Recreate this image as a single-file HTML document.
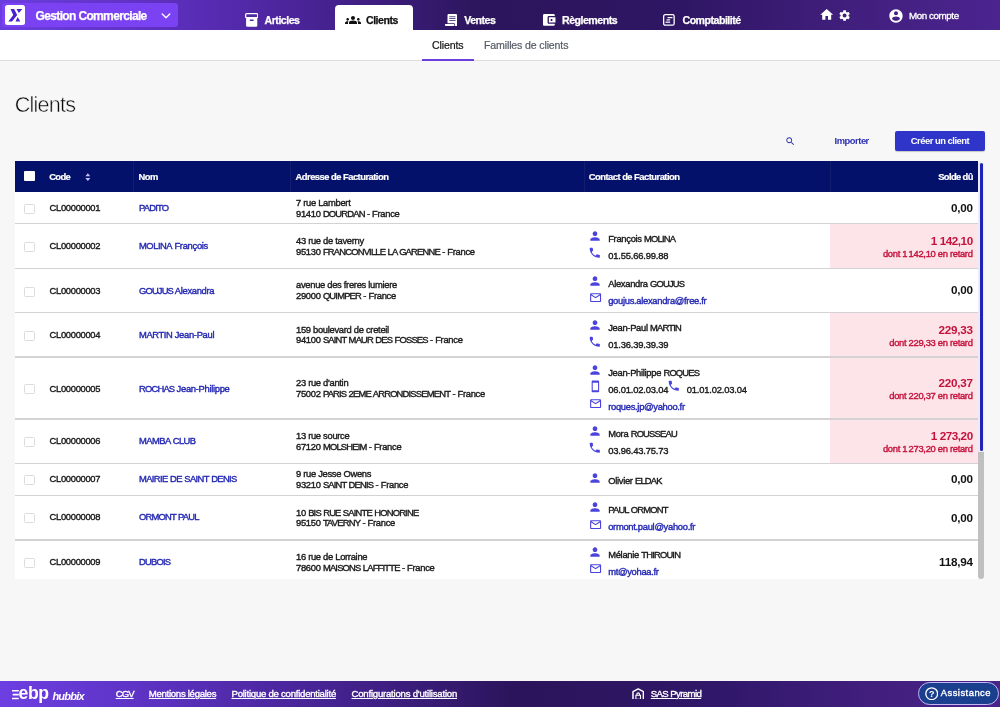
<!DOCTYPE html>
<html lang="fr">
<head>
<meta charset="utf-8">
<title>Clients</title>
<style>
*{box-sizing:border-box;margin:0;padding:0}
html,body{width:1000px;height:707px;overflow:hidden}
body{position:relative;background:#f7f7f8;font-family:"Liberation Sans",Arial,sans-serif;font-size:9.4px;color:#1a1a1a;letter-spacing:-0.3px}
#pg{position:absolute;left:0;top:0;width:1000px;height:707px;will-change:transform}
.abs{position:absolute}
svg{display:block}
a{text-decoration:none;color:inherit}
/* top bar */
#top{position:absolute;left:0;top:0;width:1000px;height:30px;background:linear-gradient(90deg,#6b3ddf 0px,#5f31c2 150px,#4a2498 300px,#2c155c 480px,#2f1664 680px,#411f7d 850px,#4b248f 1000px)}
#logo{position:absolute;left:4.800px;top:4.650px;width:20.600px;height:20.700px;background:#fff;border-radius:2.500px;overflow:hidden}
#app{position:absolute;left:2px;top:2.500px;width:175.500px;height:24.500px;background:#7b42f3;border-radius:3px}
#app span{position:absolute;left:33.600px;top:6.200px;font-size:12px;line-height:15px;font-weight:bold;color:#fff;letter-spacing:-0.650px;white-space:nowrap;-webkit-text-stroke:0.25px}
.tab{position:absolute;top:13.600px;line-height:13px;color:#fff;font-weight:bold;font-size:10.600px;letter-spacing:-0.500px;white-space:nowrap;-webkit-text-stroke:0.25px}
#tabc{position:absolute;left:335px;top:5px;width:78px;height:26px;background:#fff;border-radius:4px 4px 0 0}
/* subnav */
#sub{position:absolute;left:0;top:30px;width:1000px;height:31px;background:#fff;border-bottom:1.5px solid #dcdcde}
#sub span{position:absolute;top:9px;font-size:10.6px;line-height:13px;white-space:nowrap;letter-spacing:-0.15px;-webkit-text-stroke:0.2px}
#ul{position:absolute;left:422px;top:59px;width:52px;height:2px;background:#6a3fdb}
h1{position:absolute;left:14.800px;top:91.300px;font-size:21.600px;font-weight:normal;line-height:28px;color:#0c0c0c;letter-spacing:-0.800px;-webkit-text-stroke:0.480px #f7f7f8}
/* toolbar */
#imp{position:absolute;left:834.600px;top:135px;font-weight:bold;color:#2b30b0;font-size:9.4px;line-height:12px;letter-spacing:-0.480px}
#btn{position:absolute;left:895px;top:131px;width:90px;height:20px;background:#2e35c8;border-radius:2px;color:#fff;font-weight:bold;text-align:center;line-height:20px;font-size:9.4px;letter-spacing:-0.490px;box-shadow:0 1px 1px rgba(0,0,0,.2)}
/* table */
#th{position:absolute;left:15px;top:161.300px;width:962.800px;height:30.700px;background:#04116b}
#th span{position:absolute;top:9.700px;color:#fff;font-weight:bold;line-height:12px;white-space:nowrap;font-size:9.4px;letter-spacing:-0.520px;-webkit-text-stroke:0.2px}
#th i{position:absolute;top:0;width:1px;height:31px;background:#131d70}
.rw{position:absolute;left:15px;width:962.800px;background:#fff}
.rw .pk{position:absolute;left:814.800px;top:0;width:148px;height:100%;background:#fde4e9}
.sp{position:absolute;left:15px;width:962.800px;height:1.250px;background:#d3d3d5}
.cb{position:absolute;left:24.300px;margin-top:0.600px;width:10.700px;height:10.100px;border:1px solid #dcdcdc;border-radius:1.5px;background:#fff}
.tx{position:absolute;line-height:11px;white-space:nowrap;-webkit-text-stroke:0.38px}
u{text-decoration:none;letter-spacing:-0.8px;word-spacing:0.5px}
.c{left:49.5px}
.n{left:139px;color:#2428b2}
.a{left:296px;line-height:10.7px;margin-top:0.9px}
.k{left:608.2px}
.k.l{color:#2428b2}
.s{right:27.300px;font-size:11.700px;font-weight:bold;line-height:14px;letter-spacing:-0.250px;color:#111;-webkit-text-stroke:0}
.s.r{color:#c4123c}
.d{right:27.400px;margin-top:-1px;color:#c4123c}
.ic{position:absolute;fill:#4a43dd}
.ts{font-style:normal;font-size:5px;letter-spacing:0}
.s .ts{font-size:10px}
/* scrollbar */
#sbt{position:absolute;left:978.400px;top:449px;width:6px;height:129.500px;background:#c0c0c1;border-radius:0 0 3px 3px}
#sbl{position:absolute;left:978.400px;top:162px;width:6px;height:290px;background:#ecebfb;border-radius:3px 3px 0 0}
#sbh{position:absolute;left:979.600px;top:162.500px;width:3.600px;height:288.500px;background:#2224b8;border-radius:1.800px}
/* footer */
#ft{position:absolute;left:0;top:681.400px;width:1000px;height:25.600px;background:linear-gradient(90deg,#6d3fe2 0px,#5c32c2 150px,#43218c 350px,#2b145a 520px,#30176a 720px,#421f7e 880px,#4a238b 1000px);color:#fff}
#ft a{position:absolute;top:6.400px;text-decoration:underline;text-underline-offset:1px;line-height:12px;white-space:nowrap;font-size:9.600px;-webkit-text-stroke:0.350px}
#as{position:absolute;left:917.500px;top:681.600px;width:81px;height:23.200px;border:1.200px solid #c3b4f2;border-radius:11.600px;background:#1b3f8f}
#as span{position:absolute;left:22.200px;top:4.500px;color:#fff;font-size:9.400px;line-height:12px;letter-spacing:.5px;-webkit-text-stroke:0.350px}
</style>
</head>
<body>
<div id="pg">
<svg width="0" height="0" style="position:absolute"><defs>
<path id="i-person" d="M12 12c2.210 0 4-1.790 4-4s-1.790-4-4-4-4 1.790-4 4 1.790 4 4 4zm0 2c-2.670 0-8 1.340-8 4v2h16v-2c0-2.660-5.330-4-8-4z"/>
<path id="i-phone" d="M6.620 10.790c1.440 2.830 3.760 5.140 6.590 6.590l2.200-2.200c.27-.27.67-.36 1.020-.24 1.120.37 2.330.57 3.570.57.550 0 1 .45 1 1V20c0 .550-.45 1-1 1-9.390 0-17-7.610-17-17 0-.550.45-1 1-1h3.500c.550 0 1 .45 1 1 0 1.250.2 2.450.57 3.570.11.35.03.74-.25 1.020l-2.200 2.200z"/>
<path id="i-mail" d="M20 4H4c-1.100 0-1.990.9-1.990 2L2 18c0 1.100.9 2 2 2h16c1.100 0 2-.9 2-2V6c0-1.100-.9-2-2-2zm0 14H4V8l8 5 8-5v10zm-8-7L4 6h16l-8 5z"/>
<path id="i-mobile" d="M17 1.010L7 1c-1.100 0-1.990.9-1.990 2v18c0 1.100.89 2 1.990 2h10c1.100 0 2-.9 2-2V3c0-1.100-.9-1.990-2-1.990zM17 19H7V5h10v14z"/>
</defs></svg>
<div id="top">
  <div id="app"><span>Gestion Commerciale</span>
    <svg class="abs" style="left:158.600px;top:10px" width="10" height="6" viewBox="0 0 10 6"><path d="M1.200 1.100 L5 4.700 L8.800 1.100" fill="none" stroke="#fff" stroke-width="1.400" stroke-linecap="round" stroke-linejoin="round"/></svg>
  </div>
  <div id="logo"><svg width="20.600" height="20.700" viewBox="4.800 4.650 20.600 20.700"><g fill="#4a20cf"><polygon points="10.300,8.600 13.900,8.600 17,14.700 11.800,21.100 8.100,21.100 13.100,14.700"/><polygon points="16.300,8.600 22.100,8.600 18.700,12.600"/><polygon points="17.450,16.600 20.100,21.100 15.300,21.100"/></g></svg></div>
  <div id="tabc"></div>
  <!-- Articles -->
  <svg class="abs" style="left:245px;top:13.200px" width="13.400" height="13.700" viewBox="0 0 13.400 13.700"><rect x="0.650" y="0.650" width="12.100" height="4" rx="1" fill="none" stroke="#fff" stroke-width="1.300"/><path d="M1.100 4.300h11.200v8.200a1.200 1.200 0 0 1-1.200 1.200H2.300a1.200 1.200 0 0 1-1.200-1.200z" fill="#fff"/><rect x="4.700" y="6.600" width="4" height="1.300" rx=".4" fill="#4b269e"/></svg>
  <div class="tab" style="left:264.600px">Articles</div>
  <!-- Clients -->
  <svg class="abs" style="left:345px;top:11.800px" width="16" height="16" viewBox="0 0 24 24" fill="#111"><path d="M12 12.750c1.630 0 3.070.39 4.240.9 1.080.48 1.760 1.560 1.760 2.730V18H6v-1.610c0-1.180.68-2.260 1.760-2.730 1.170-.52 2.610-.91 4.240-.91zM4 13c1.100 0 2-.9 2-2s-.9-2-2-2-2 .9-2 2 .9 2 2 2zm1.130 1.100c-.37-.06-.74-.1-1.130-.1-.99 0-1.930.21-2.780.58C.48 14.900 0 15.620 0 16.430V18h4.500v-1.610c0-.83.23-1.610.63-2.290zM20 13c1.100 0 2-.9 2-2s-.9-2-2-2-2 .9-2 2 .9 2 2 2zm4 3.430c0-.81-.48-1.530-1.220-1.850-.85-.37-1.790-.58-2.780-.58-.39 0-.76.040-1.130.1.400.68.630 1.460.630 2.290V18H24v-1.570zM12 6c1.660 0 3 1.340 3 3s-1.340 3-3 3-3-1.340-3-3 1.340-3 3-3z"/></svg>
  <div class="tab" style="left:366px;color:#111">Clients</div>
  <!-- Ventes -->
  <svg class="abs" style="left:445px;top:13.500px" width="12.200" height="12.300" viewBox="0 0 12.200 12.300"><path d="M2.500 1.200a1.200 1.200 0 0 1 1.200-1.200h7.300a1.200 1.200 0 0 1 1.200 1.200v9.800a1.300 1.300 0 0 1-1.300 1.300H9.700V9.300H2.500z" fill="#fff"/><path d="M0 9.900h9v1.300a1.100 1.100 0 0 0 1.100 1.100H1.600A1.600 1.600 0 0 1 0 10.700z" fill="#fff"/><g fill="#2f1668"><rect x="4.300" y="2.400" width="6.200" height=".75"/><rect x="4.300" y="4.200" width="6.200" height=".75"/><rect x="4.300" y="6" width="6.200" height=".75"/></g></svg>
  <div class="tab" style="left:464.200px">Ventes</div>
  <!-- Reglements -->
  <svg class="abs" style="left:540.900px;top:12.200px" width="15.800" height="15.800" viewBox="0 0 24 24" fill="#fff"><path d="M21 18v1c0 1.100-.9 2-2 2H5c-1.110 0-2-.9-2-2V5c0-1.100.89-2 2-2h14c1.100 0 2 .9 2 2v1h-9c-1.110 0-2 .9-2 2v8c0 1.100.89 2 2 2h9zm-9-2h10V8H12v8zm4-2.500c-.83 0-1.500-.67-1.500-1.500s.67-1.500 1.500-1.500 1.500.67 1.500 1.500-.67 1.500-1.500 1.500z"/></svg>
  <div class="tab" style="left:562px">Règlements</div>
  <!-- Comptabilite -->
  <svg class="abs" style="left:663.400px;top:13.900px" width="11.800" height="11.800" viewBox="0 0 11.800 11.800"><rect x=".65" y=".65" width="10.500" height="10.500" rx="1.500" fill="none" stroke="#fff" stroke-width="1.300"/><g fill="#fff"><rect x="4.500" y="3" width="5" height="1.200"/><rect x="3.500" y="5.300" width="3.600" height="1.200"/><rect x="2.500" y="7.600" width="4.600" height="1.200"/></g></svg>
  <div class="tab" style="left:682.500px">Comptabilité</div>
  <!-- home / settings / account -->
  <svg class="abs" style="left:819.100px;top:6.900px" width="15.400" height="15.400" viewBox="0 0 24 24" fill="#fff"><path d="M10 20v-6h4v6h5v-8h3L12 3 2 12h3v8z"/></svg>
  <svg class="abs" style="left:838.300px;top:8.700px" width="13.200" height="13.200" viewBox="0 0 24 24" fill="#fff"><path d="M19.140 12.940c.04-.3.060-.61.060-.94 0-.32-.02-.64-.07-.94l2.030-1.580c.18-.14.230-.41.120-.61l-1.920-3.320c-.12-.22-.37-.29-.59-.22l-2.390.96c-.5-.38-1.030-.7-1.620-.94l-.36-2.540c-.04-.24-.24-.41-.48-.41h-3.840c-.24 0-.43.170-.47.410l-.36 2.540c-.59.240-1.130.57-1.620.94l-2.390-.96c-.22-.08-.47 0-.59.220L2.740 8.870c-.12.210-.08.470.12.610l2.030 1.580c-.05.300-.09.630-.09.940s.02.640.07.940l-2.030 1.580c-.18.140-.23.410-.12.610l1.920 3.320c.12.220.37.290.59.220l2.390-.96c.5.380 1.030.7 1.620.94l.36 2.540c.05.240.24.410.48.410h3.840c.24 0 .44-.17.470-.41l.36-2.540c.59-.24 1.130-.56 1.620-.94l2.390.96c.22.080.47 0 .59-.22l1.920-3.320c.12-.22.070-.47-.12-.61l-2.010-1.580zM12 15.600c-1.980 0-3.600-1.620-3.600-3.600s1.620-3.600 3.600-3.600 3.600 1.620 3.600 3.600-1.620 3.600-3.600 3.600z"/></svg>
  <svg class="abs" style="left:887.900px;top:8.300px" width="16" height="16" viewBox="0 0 24 24" fill="#fff"><path d="M12 2C6.480 2 2 6.480 2 12s4.480 10 10 10 10-4.480 10-10S17.520 2 12 2zm0 3c1.660 0 3 1.340 3 3s-1.340 3-3 3-3-1.340-3-3 1.340-3 3-3zm0 14.200c-2.500 0-4.710-1.280-6-3.220.03-1.990 4-3.080 6-3.080 1.990 0 5.970 1.090 6 3.080-1.290 1.940-3.500 3.220-6 3.220z"/></svg>
  <div class="abs" style="left:908.900px;top:9.700px;color:#fff;font-size:9.800px;line-height:12px;white-space:nowrap;letter-spacing:-0.410px;-webkit-text-stroke:0.300px">Mon compte</div>
</div>
<div id="sub">
  <span style="left:432px;color:#111">Clients</span>
  <span style="left:484px;color:#555b66">Familles de clients</span>
</div>
<div id="ul"></div>
<h1>Clients</h1>
<svg class="abs" style="left:785.300px;top:135.700px" width="10.700" height="10.700" viewBox="0 0 24 24" fill="#2b2fa8"><path d="M15.500 14h-.79l-.28-.27C15.410 12.590 16 11.110 16 9.500 16 5.910 13.090 3 9.500 3S3 5.910 3 9.500 5.910 16 9.500 16c1.610 0 3.090-.59 4.230-1.570l.27.280v.79l5 4.990L20.490 19l-4.990-5zm-6 0C7.010 14 5 11.990 5 9.500S7.010 5 9.500 5 14 7.010 14 9.500 11.990 14 9.500 14z"/></svg>
<div id="imp">Importer</div>
<div id="btn">Créer un client</div>

<div id="th">
  <div class="abs" style="left:9.300px;top:9.700px;width:10.700px;height:10.500px;background:#fff;border-radius:1px"></div>
  <svg class="abs" style="left:70px;top:11.500px" width="6" height="8.200" viewBox="0 0 6 8.200" fill="#c5c3ff"><polygon points="0.400,3.300 5.300,3.300 2.850,0.200"/><polygon points="0.400,5 5.300,5 2.850,7.900"/></svg>
  <span style="left:34.300px;letter-spacing:-0.700px">Code</span>
  <span style="left:123.500px">Nom</span>
  <span style="left:280.600px">Adresse de Facturation</span>
  <span style="left:573.800px">Contact de Facturation</span>
  <span style="right:5px;letter-spacing:-0.620px">Solde dû</span>
  <i style="left:118.200px"></i><i style="left:275.300px"></i><i style="left:569.200px"></i><i style="left:814.600px"></i>
</div>

<div id="rows">
<div class="rw" style="top:192px;height:31.7px">
</div>
<div class="cb" style="top:203.45px"></div>
<div class="tx c" style="top:202.35px">CL00000001</div>
<div class="tx n" style="top:202.35px"><u>PADITO</u></div>
<div class="tx a" style="top:196.95px">7 rue Lambert<br>91410 <u>DOURDAN</u> - France</div>
<div class="tx s" style="top:200.85px">0,00</div>
<div class="rw" style="top:223.7px;height:44.5px">
<div class="pk"></div>
</div>
<div class="cb" style="top:241.55px"></div>
<div class="tx c" style="top:240.45px">CL00000002</div>
<div class="tx n" style="top:240.45px"><u style="letter-spacing:-0.47px">MOLINA</u> François</div>
<div class="tx a" style="top:235.05px">43 rue de taverny<br>95130 <u>FRANCONVILLE LA GARENNE</u> - France</div>
<svg class="ic" style="left:588.20px;top:229.10px" width="14" height="14" viewBox="0 0 24 24"><use href="#i-person"/></svg>
<div class="tx k" style="top:233.10px">François <u>MOLINA</u></div>
<svg class="ic" style="left:588.45px;top:246.05px" width="13.5" height="13.5" viewBox="0 0 24 24"><use href="#i-phone"/></svg>
<div class="tx k" style="letter-spacing:-0.18px;top:249.80px">01.55.66.99.88</div>
<div class="tx s r" style="letter-spacing:-0.45px;top:233.75px">1<i class="ts"> </i>142,10</div>
<div class="tx d" style="top:248.95px">dont 1<i class="ts"> </i>142,10 en retard</div>
<div class="rw" style="top:268.2px;height:44.4px">
</div>
<div class="cb" style="top:286px"></div>
<div class="tx c" style="top:284.9px">CL00000003</div>
<div class="tx n" style="top:284.9px"><u style="letter-spacing:-0.85px">GOUJUS</u> Alexandra</div>
<div class="tx a" style="top:279.5px">avenue des freres lumiere<br>29000 <u>QUIMPER</u> - France</div>
<svg class="ic" style="left:588.20px;top:273.50px" width="14" height="14" viewBox="0 0 24 24"><use href="#i-person"/></svg>
<div class="tx k" style="top:277.50px">Alexandra <u>GOUJUS</u></div>
<svg class="ic" style="left:588.60px;top:291.15px" width="13.2" height="13.2" viewBox="0 0 24 24"><use href="#i-mail"/></svg>
<div class="tx k l" style="top:294.50px">goujus.alexandra@free.fr</div>
<div class="tx s" style="top:283.4px">0,00</div>
<div class="rw" style="top:312.6px;height:44.4px">
<div class="pk"></div>
</div>
<div class="cb" style="top:330.4px"></div>
<div class="tx c" style="top:329.3px">CL00000004</div>
<div class="tx n" style="top:329.3px"><u style="letter-spacing:-0.4px">MARTIN</u> Jean-Paul</div>
<div class="tx a" style="top:323.9px">159 boulevard de creteil<br>94100 <u>SAINT MAUR DES FOSSES</u> - France</div>
<svg class="ic" style="left:588.20px;top:317.90px" width="14" height="14" viewBox="0 0 24 24"><use href="#i-person"/></svg>
<div class="tx k" style="top:321.90px">Jean-Paul <u>MARTIN</u></div>
<svg class="ic" style="left:588.45px;top:334.65px" width="13.5" height="13.5" viewBox="0 0 24 24"><use href="#i-phone"/></svg>
<div class="tx k" style="letter-spacing:-0.18px;top:338.90px">01.36.39.39.39</div>
<div class="tx s r" style="top:322.6px">229,33</div>
<div class="tx d" style="top:337.8px">dont 229,33 en retard</div>
<div class="rw" style="top:357px;height:62px">
<div class="pk"></div>
</div>
<div class="cb" style="top:383.6px"></div>
<div class="tx c" style="top:382.5px">CL00000005</div>
<div class="tx n" style="top:382.5px"><u>ROCHAS</u> Jean-Philippe</div>
<div class="tx a" style="top:377.1px">23 rue d'antin<br>75002 <u>PARIS 2EME ARRONDISSEMENT</u> - France</div>
<svg class="ic" style="left:588.20px;top:362.70px" width="14" height="14" viewBox="0 0 24 24"><use href="#i-person"/></svg>
<div class="tx k" style="top:366.70px">Jean-Philippe <u>ROQUES</u></div>
<svg class="ic" style="left:588.80px;top:380.15px" width="12.8" height="12.8" viewBox="0 0 24 24"><use href="#i-mobile"/></svg>
<div class="tx k" style="letter-spacing:-0.18px;top:383.80px">06.01.02.03.04</div>
<svg class="ic" style="left:667.25px;top:379.45px" width="13.5" height="13.5" viewBox="0 0 24 24"><use href="#i-phone"/></svg>
<div class="tx k" style="letter-spacing:-0.18px;left:686.8px;top:383.80px">01.01.02.03.04</div>
<svg class="ic" style="left:588.60px;top:396.95px" width="13.2" height="13.2" viewBox="0 0 24 24"><use href="#i-mail"/></svg>
<div class="tx k l" style="top:400.80px">roques.jp@yahoo.fr</div>
<div class="tx s r" style="top:375.8px">220,37</div>
<div class="tx d" style="top:391px">dont 220,37 en retard</div>
<div class="rw" style="top:419px;height:44.4px">
<div class="pk"></div>
</div>
<div class="cb" style="top:436.20px"></div>
<div class="tx c" style="top:434.70px">CL00000006</div>
<div class="tx n" style="top:434.70px"><u style="letter-spacing:-0.55px">MAMBA CLUB</u></div>
<div class="tx a" style="top:430.3px">13 rue source<br>67120 <u>MOLSHEIM</u> - France</div>
<svg class="ic" style="left:588.20px;top:423.90px" width="14" height="14" viewBox="0 0 24 24"><use href="#i-person"/></svg>
<div class="tx k" style="top:427.90px">Mora <u>ROUSSEAU</u></div>
<svg class="ic" style="left:588.45px;top:441.15px" width="13.5" height="13.5" viewBox="0 0 24 24"><use href="#i-phone"/></svg>
<div class="tx k" style="letter-spacing:-0.18px;top:444.90px">03.96.43.75.73</div>
<div class="tx s r" style="letter-spacing:-0.45px;top:429px">1<i class="ts"> </i>273,20</div>
<div class="tx d" style="top:444.2px">dont 1<i class="ts"> </i>273,20 en retard</div>
<div class="rw" style="top:463.4px;height:31.9px">
</div>
<div class="cb" style="top:474.35px"></div>
<div class="tx c" style="top:472.85px">CL00000007</div>
<div class="tx n" style="top:472.85px"><u style="letter-spacing:-0.62px">MAIRIE DE SAINT DENIS</u></div>
<div class="tx a" style="top:468.45px">9 rue Jesse Owens<br>93210 <u>SAINT DENIS</u> - France</div>
<svg class="ic" style="left:588.20px;top:470.50px" width="14" height="14" viewBox="0 0 24 24"><use href="#i-person"/></svg>
<div class="tx k" style="top:474.50px">Olivier <u>ELDAK</u></div>
<div class="tx s" style="top:472.35px">0,00</div>
<div class="rw" style="top:495.3px;height:44.7px">
</div>
<div class="cb" style="top:512.65px"></div>
<div class="tx c" style="top:511.15px">CL00000008</div>
<div class="tx n" style="top:511.15px"><u>ORMONT PAUL</u></div>
<div class="tx a" style="top:506.75px">10 <u>BIS RUE SAINTE HONORINE</u><br>95150 <u>TAVERNY</u> - France</div>
<svg class="ic" style="left:588.20px;top:500.20px" width="14" height="14" viewBox="0 0 24 24"><use href="#i-person"/></svg>
<div class="tx k" style="top:504.20px"><u>PAUL ORMONT</u></div>
<svg class="ic" style="left:588.60px;top:517.85px" width="13.2" height="13.2" viewBox="0 0 24 24"><use href="#i-mail"/></svg>
<div class="tx k l" style="top:521.20px">ormont.paul@yahoo.fr</div>
<div class="tx s" style="top:510.65px">0,00</div>
<div class="rw" style="top:540px;height:38.5px">
</div>
<div class="cb" style="top:557.20px"></div>
<div class="tx c" style="top:555.70px">CL00000009</div>
<div class="tx n" style="top:555.70px"><u>DUBOIS</u></div>
<div class="tx a" style="top:551.3px">16 rue de Lorraine<br>78600 <u>MAISONS LAFFITTE</u> - France</div>
<svg class="ic" style="left:588.20px;top:544.60px" width="14" height="14" viewBox="0 0 24 24"><use href="#i-person"/></svg>
<div class="tx k" style="top:548.60px">Mélanie <u>THIROUIN</u></div>
<svg class="ic" style="left:588.60px;top:562.25px" width="13.2" height="13.2" viewBox="0 0 24 24"><use href="#i-mail"/></svg>
<div class="tx k l" style="top:565.60px">mt@yohaa.fr</div>
<div class="tx s" style="top:555.2px">118,94</div>
<div class="sp" style="top:223.10px"></div>
<div class="sp" style="top:267.60px"></div>
<div class="sp" style="top:312.00px"></div>
<div class="sp" style="top:356.40px"></div>
<div class="sp" style="top:418.40px"></div>
<div class="sp" style="top:462.80px"></div>
<div class="sp" style="top:494.70px"></div>
<div class="sp" style="top:539.40px"></div>
</div>

<div id="sbt"></div><div id="sbl"></div><div id="sbh"></div>

<div id="ft">
  <svg class="abs" style="left:11.900px;top:8.600px" width="7" height="10" viewBox="0 0 7 10" fill="#fff"><rect x="0" y="-.15" width="6.800" height="1.700" rx=".5"/><rect x="0.600" y="3.750" width="6.200" height="1.700" rx=".5"/><rect x="0" y="7.650" width="6.800" height="1.700" rx=".5"/></svg>
  <div class="abs" style="left:18.600px;top:2.100px;font-size:17.600px;line-height:20px;font-weight:bold;letter-spacing:-0.400px;color:#fff">ebp</div>
  <div class="abs" style="left:52.400px;top:8.300px;font-size:11px;line-height:12px;font-weight:bold;font-style:italic;letter-spacing:-0.750px;color:#fff">hubbix</div>
  <a style="left:115.700px;letter-spacing:-0.930px">CGV</a>
  <a style="left:148.800px;letter-spacing:-0.290px">Mentions légales</a>
  <a style="left:231.500px;letter-spacing:-0.250px">Politique de confidentialité</a>
  <a style="left:351.500px;letter-spacing:-0.220px">Configurations d'utilisation</a>
  <svg class="abs" style="left:631.800px;top:6.200px" width="12.400" height="11.600" viewBox="0 0 12.400 11.600"><path d="M1 11.200V3.700L6.200 0.900L11.400 3.700V11.200" fill="none" stroke="#fff" stroke-width="1.500" stroke-linejoin="round"/><path d="M3.900 11.200V7.300h4.600v3.900zM4.900 7.300V6.200a1.300 1.300 0 0 1 2.600 0v1.100" fill="none" stroke="#fff" stroke-width="1.100"/></svg>
  <a style="left:650.800px;letter-spacing:-0.610px">SAS Pyramid</a>
</div>
<div id="as"><svg class="abs" style="left:6.500px;top:4.200px" width="13.400" height="13.400" viewBox="0 0 13.400 13.400"><circle cx="6.700" cy="6.700" r="5.900" fill="none" stroke="#fff" stroke-width="1.300"/><text x="6.700" y="9.900" text-anchor="middle" font-family="Liberation Sans,sans-serif" font-weight="bold" font-size="9" fill="#fff" letter-spacing="0">?</text></svg><span>Assistance</span></div>
</div>
</body>
</html>
